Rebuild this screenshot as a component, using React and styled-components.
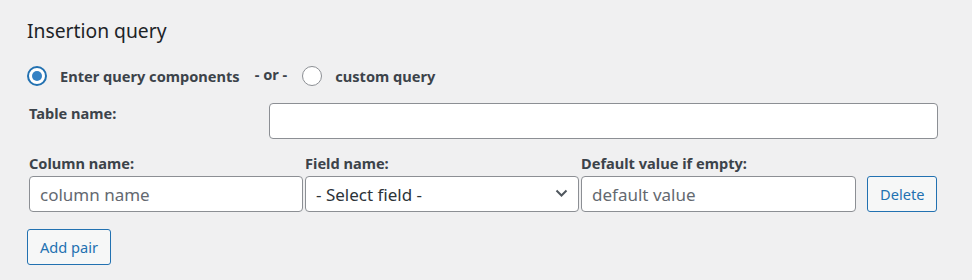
import React, { useState } from 'react';
import styled, { createGlobalStyle } from 'styled-components';

const GlobalStyle = createGlobalStyle`
  html, body {
    margin: 0;
    padding: 0;
    background: #f0f0f1;
  }
  body {
    font-family: "Noto Sans", "Open Sans", sans-serif;
    color: #3c434a;
  }
`;

const Section = styled.div`
  padding: 18px 34px 14px 27px;
  width: 972px;
  box-sizing: border-box;
`;

const Heading = styled.h3`
  margin: 0 0 22px;
  font-size: 19.3px;
  line-height: 26px;
  font-weight: 400;
  color: #1d2327;
`;

const ModeRow = styled.div`
  display: flex;
  align-items: center;
  height: 20px;
  margin-bottom: 17px;
`;

const RadioLabel = styled.label`
  display: flex;
  align-items: center;
  gap: 13px;
  font-size: 14.6px;
  font-weight: 700;
  color: #3c434a;
  cursor: pointer;
`;

const RadioCircle = styled.span`
  width: 20px;
  height: 20px;
  box-sizing: border-box;
  border-radius: 50%;
  background: #fff;
  border: ${(p) => (p.checked ? '2px solid #2271b1' : '1px solid #8c8f94')};
  display: flex;
  align-items: center;
  justify-content: center;
  &::after {
    content: '';
    display: ${(p) => (p.checked ? 'block' : 'none')};
    width: 10px;
    height: 10px;
    border-radius: 50%;
    background: #3582c4;
  }
`;

const Or = styled.span`
  font-size: 14.6px;
  font-weight: 700;
  margin: 0 15px 0 15px;
  position: relative;
  top: -2px;
`;

const TableRow = styled.div`
  display: flex;
  align-items: flex-start;
  padding-left: 2px;
  margin-bottom: 14px;
`;

const Label = styled.div`
  font-size: 14.6px;
  font-weight: 700;
  color: #3c434a;
  line-height: 20px;
  width: ${(p) => p.width || 'auto'};
  padding-top: ${(p) => p.top || 0};
  flex-shrink: 0;
`;

const TextInput = styled.input`
  box-sizing: border-box;
  width: ${(p) => p.width || '100%'};
  height: 36px;
  padding: 0 10px;
  border: 1px solid #8c8f94;
  border-radius: 4px;
  background: #fff;
  font-family: inherit;
  font-size: 17px;
  color: #2c3338;
  outline: none;
  &::placeholder {
    color: #646970;
  }
`;

const PairGrid = styled.div`
  display: grid;
  grid-template-columns: 274px 274px 275px auto;
  column-gap: 2px;
  row-gap: 3px;
  padding-left: 2px;
  align-items: center;
`;

const SelectBox = styled.div`
  position: relative;
  box-sizing: border-box;
  height: 36px;
  border: 1px solid #8c8f94;
  border-radius: 4px;
  background: #fff;
  display: flex;
  align-items: center;
  padding: 0 10px;
  font-size: 17px;
  color: #2c3338;
`;

const Chevron = styled.svg`
  position: absolute;
  right: 10px;
  top: 50%;
  margin-top: -5px;
`;

const Button = styled.button`
  box-sizing: border-box;
  height: 36px;
  padding: 0 12px;
  border: 1px solid #2271b1;
  border-radius: 3px;
  background: #f6f7f7;
  color: #2271b1;
  font-family: inherit;
  font-size: 14.6px;
  cursor: pointer;
  margin-left: ${(p) => p.offset || 0};
  justify-self: start;
`;

const Footer = styled.div`
  margin-top: 17px;
`;

export default function App() {
  const [mode, setMode] = useState('components');
  return (
    <>
      <GlobalStyle />
      <Section>
        <Heading>Insertion query</Heading>
        <ModeRow>
          <RadioLabel onClick={() => setMode('components')}>
            <RadioCircle checked={mode === 'components'} />
            Enter query components
          </RadioLabel>
          <Or>- or -</Or>
          <RadioLabel onClick={() => setMode('custom')}>
            <RadioCircle checked={mode === 'custom'} />
            custom query
          </RadioLabel>
        </ModeRow>
        <TableRow>
          <Label width="240px">Table name:</Label>
          <TextInput width="670px" />
        </TableRow>
        <PairGrid>
          <Label>Column name:</Label>
          <Label>Field name:</Label>
          <Label>Default value if empty:</Label>
          <span />
          <TextInput placeholder="column name" />
          <SelectBox>
            - Select field -
            <Chevron width="13" height="9" viewBox="0 0 13 9">
              <path d="M1.5 1.5 L6.5 6.5 L11.5 1.5" fill="none" stroke="#50575e" strokeWidth="2" />
            </Chevron>
          </SelectBox>
          <TextInput placeholder="default value" />
          <Button offset="9px">Delete</Button>
        </PairGrid>
        <Footer>
          <Button>Add pair</Button>
        </Footer>
      </Section>
    </>
  );
}
